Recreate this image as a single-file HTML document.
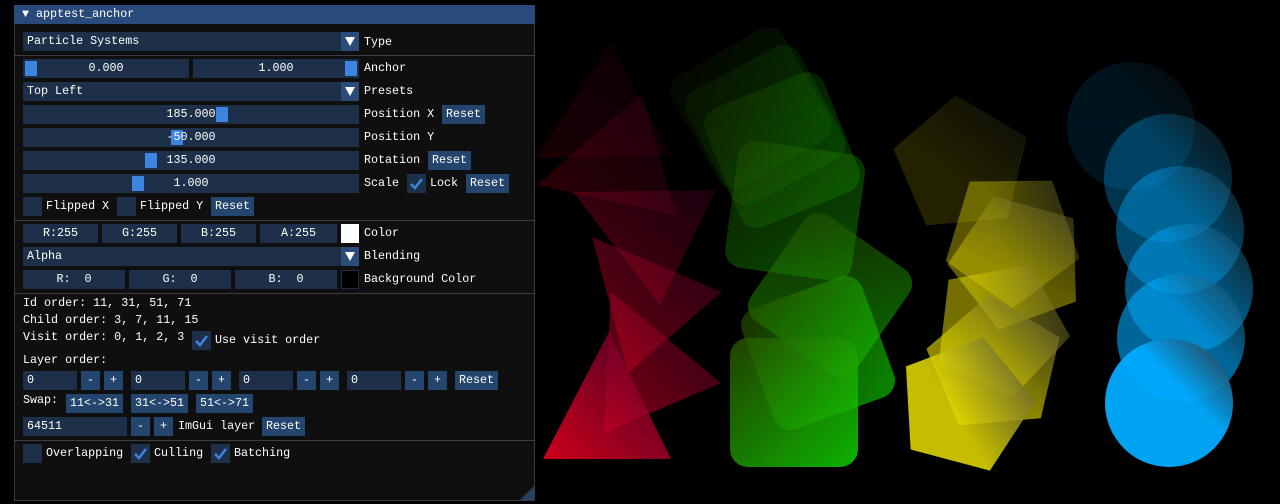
<!DOCTYPE html>
<html><head><meta charset="utf-8"><style>
*{margin:0;padding:0;box-sizing:border-box}
body{width:1280px;height:504px;background:#000;position:relative;overflow:hidden;font-family:"Liberation Mono",monospace;font-size:11.7px;color:#fff}
.a{position:absolute;white-space:pre}
.win{position:absolute;left:14px;top:5px;width:521px;height:496px;background:#0f0f0f;border:1px solid #3b3b44}
.title{position:absolute;left:14px;top:5px;width:521px;height:19px;background:#294a7a;line-height:19px;padding-left:8px}
.f{position:absolute;height:19px;background:#1d2f49;line-height:19px;white-space:pre}
.b{position:absolute;height:19px;background:#24456d;line-height:19px;text-align:center}
.c{text-align:center}
.sep{position:absolute;left:15px;width:519px;height:1px;background:#3c3c44}
.g{position:absolute;width:12px;height:15px;background:#3d85e0}
.arr{position:absolute;width:18px;height:19px;background:#2b4c78}
.arr:after{content:"";position:absolute;left:4px;top:5px;border-left:5px solid transparent;border-right:5px solid transparent;border-top:9px solid #fff}
.t{position:absolute;line-height:19px;white-space:pre}
</style></head><body>
<div class="win"></div>
<div class="title">▼ apptest_anchor</div>

<div class="f" style="left:23px;top:32px;width:335px;padding-left:4px">Particle Systems</div><div class="arr" style="left:341px;top:32px"></div><div class="t" style="left:364px;top:33px">Type</div>
<div class="sep" style="top:55px"></div>

<div class="f" style="left:23px;top:59px;width:166px"></div><div class="g" style="left:25px;top:61px"></div><div class="t c" style="left:23px;top:59px;width:166px">0.000</div>
<div class="f" style="left:193px;top:59px;width:166px"></div><div class="g" style="left:345px;top:61px"></div><div class="t c" style="left:193px;top:59px;width:166px">1.000</div>
<div class="t" style="left:364px;top:59px">Anchor</div>

<div class="f" style="left:23px;top:82px;width:335px;padding-left:4px">Top Left</div><div class="arr" style="left:341px;top:82px"></div><div class="t" style="left:364px;top:82px">Presets</div>

<div class="f" style="left:23px;top:105px;width:336px"></div><div class="g" style="left:216px;top:107px"></div><div class="t c" style="left:23px;top:105px;width:336px">185.000</div>
<div class="t" style="left:364px;top:105px">Position X</div><div class="b" style="left:442px;top:105px;width:43px">Reset</div>

<div class="f" style="left:23px;top:128px;width:336px"></div><div class="g" style="left:171px;top:130px"></div><div class="t c" style="left:23px;top:128px;width:336px">-50.000</div>
<div class="t" style="left:364px;top:128px">Position Y</div>

<div class="f" style="left:23px;top:151px;width:336px"></div><div class="g" style="left:145px;top:153px"></div><div class="t c" style="left:23px;top:151px;width:336px">135.000</div>
<div class="t" style="left:364px;top:151px">Rotation</div><div class="b" style="left:428px;top:151px;width:43px">Reset</div>

<div class="f" style="left:23px;top:174px;width:336px"></div><div class="g" style="left:132px;top:176px"></div><div class="t c" style="left:23px;top:174px;width:336px">1.000</div>
<div class="t" style="left:364px;top:174px">Scale</div>
<div class="f" style="left:407px;top:174px;width:19px"><svg width="19" height="19"><polyline points="4,10 8,14 15,5" fill="none" stroke="#3d85e0" stroke-width="2.5"/></svg></div>
<div class="t" style="left:430px;top:174px">Lock</div><div class="b" style="left:466px;top:174px;width:43px">Reset</div>

<div class="f" style="left:23px;top:197px;width:19px"></div><div class="t" style="left:46px;top:197px">Flipped X</div>
<div class="f" style="left:117px;top:197px;width:19px"></div><div class="t" style="left:140px;top:197px">Flipped Y</div>
<div class="b" style="left:211px;top:197px;width:43px">Reset</div>
<div class="sep" style="top:220px"></div>

<div class="f c" style="left:23px;top:224px;width:75px">R:255</div>
<div class="f c" style="left:102px;top:224px;width:75px">G:255</div>
<div class="f c" style="left:181px;top:224px;width:75px">B:255</div>
<div class="f c" style="left:260px;top:224px;width:77px">A:255</div>
<div class="a" style="left:341px;top:224px;width:18px;height:19px;background:#fff"></div>
<div class="t" style="left:364px;top:224px">Color</div>

<div class="f" style="left:23px;top:247px;width:335px;padding-left:4px">Alpha</div><div class="arr" style="left:341px;top:247px"></div><div class="t" style="left:364px;top:247px">Blending</div>

<div class="f c" style="left:23px;top:270px;width:102px">R:  0</div>
<div class="f c" style="left:129px;top:270px;width:102px">G:  0</div>
<div class="f c" style="left:235px;top:270px;width:102px">B:  0</div>
<div class="a" style="left:341px;top:270px;width:18px;height:19px;background:#000;border:1px solid #1d2f49"></div>
<div class="t" style="left:364px;top:270px">Background Color</div>
<div class="sep" style="top:293px"></div>

<div class="t" style="left:23px;top:294px">Id order: 11, 31, 51, 71</div>
<div class="t" style="left:23px;top:311px">Child order: 3, 7, 11, 15</div>
<div class="t" style="left:23px;top:328px">Visit order: 0, 1, 2, 3</div>
<div class="f" style="left:192px;top:331px;width:19px"><svg width="19" height="19"><polyline points="4,10 8,14 15,5" fill="none" stroke="#3d85e0" stroke-width="2.5"/></svg></div>
<div class="t" style="left:215px;top:331px">Use visit order</div>
<div class="t" style="left:23px;top:351px">Layer order:</div>

<div class="f" style="left:23px;top:371px;width:54px;padding-left:4px">0</div><div class="b" style="left:81px;top:371px;width:19px">-</div><div class="b" style="left:104px;top:371px;width:19px">+</div>
<div class="f" style="left:131px;top:371px;width:54px;padding-left:4px">0</div><div class="b" style="left:189px;top:371px;width:19px">-</div><div class="b" style="left:212px;top:371px;width:19px">+</div>
<div class="f" style="left:239px;top:371px;width:54px;padding-left:4px">0</div><div class="b" style="left:297px;top:371px;width:19px">-</div><div class="b" style="left:320px;top:371px;width:19px">+</div>
<div class="f" style="left:347px;top:371px;width:54px;padding-left:4px">0</div><div class="b" style="left:405px;top:371px;width:19px">-</div><div class="b" style="left:428px;top:371px;width:19px">+</div>
<div class="b" style="left:455px;top:371px;width:43px">Reset</div>

<div class="t" style="left:23px;top:391px">Swap:</div>
<div class="b" style="left:66px;top:394px;width:57px">11&lt;-&gt;31</div>
<div class="b" style="left:131px;top:394px;width:57px">31&lt;-&gt;51</div>
<div class="b" style="left:196px;top:394px;width:57px">51&lt;-&gt;71</div>

<div class="f" style="left:23px;top:417px;width:104px;padding-left:4px">64511</div><div class="b" style="left:131px;top:417px;width:19px">-</div><div class="b" style="left:154px;top:417px;width:19px">+</div>
<div class="t" style="left:178px;top:417px">ImGui layer</div><div class="b" style="left:262px;top:417px;width:43px">Reset</div>
<div class="sep" style="top:440px"></div>

<div class="f" style="left:23px;top:444px;width:19px"></div><div class="t" style="left:46px;top:444px">Overlapping</div>
<div class="f" style="left:131px;top:444px;width:19px"><svg width="19" height="19"><polyline points="4,10 8,14 15,5" fill="none" stroke="#3d85e0" stroke-width="2.5"/></svg></div><div class="t" style="left:154px;top:444px">Culling</div>
<div class="f" style="left:211px;top:444px;width:19px"><svg width="19" height="19"><polyline points="4,10 8,14 15,5" fill="none" stroke="#3d85e0" stroke-width="2.5"/></svg></div><div class="t" style="left:234px;top:444px">Batching</div>
<svg class="a" style="left:518px;top:484px" width="16" height="16"><polygon points="16,2 16,16 2,16" fill="#26405f"/></svg>

<svg class="a" style="left:536px;top:0" width="744" height="504" viewBox="536 0 744 504">
<defs>
<linearGradient id="r" x1="1" y1="0" x2="0" y2="1"><stop offset="0" stop-color="#500030"/><stop offset="1" stop-color="#ff0020"/></linearGradient>
<linearGradient id="gr" x1="0" y1="0" x2="1" y2="1"><stop offset="0" stop-color="#2a5000"/><stop offset="1" stop-color="#10e000"/></linearGradient>
<linearGradient id="y" x1="1" y1="0" x2="0" y2="1"><stop offset="0" stop-color="#404040"/><stop offset="0.6" stop-color="#e8de00"/><stop offset="1" stop-color="#e8de00"/></linearGradient>
<linearGradient id="bl" x1="1" y1="0" x2="0" y2="1"><stop offset="0" stop-color="#303030"/><stop offset="0.4" stop-color="#00aaff"/><stop offset="1" stop-color="#00aaff"/></linearGradient>
</defs>
<g fill="url(#r)">
<polygon points="610,43 535,158 671,155" opacity="0.1"/>
<polygon points="642,93 537,185 676,215" opacity="0.18"/>
<polygon points="573,192 716,190 660,305" opacity="0.32"/>
<polygon points="592,237 722,292 628,373" opacity="0.42"/>
<polygon points="611,292 721,383 604,433" opacity="0.5"/>
<polygon points="609,332 543,459 671,459" opacity="0.8"/>
</g>
<g fill="url(#gr)">
<rect x="-64" y="-64" width="128" height="128" rx="18" transform="translate(751,108) rotate(-30)" opacity="0.1"/>
<rect x="-64" y="-64" width="128" height="128" rx="18" transform="translate(765,125) rotate(-28)" opacity="0.14"/>
<rect x="-64" y="-64" width="128" height="128" rx="18" transform="translate(782,150) rotate(-22)" opacity="0.22"/>
<rect x="-64" y="-64" width="128" height="128" rx="18" transform="translate(795,211) rotate(8)" opacity="0.35"/>
<rect x="-64" y="-64" width="128" height="128" rx="18" transform="translate(830,295) rotate(35)" opacity="0.5"/>
<rect x="-64" y="-64" width="128" height="128" rx="18" transform="translate(818,353) rotate(-20)" opacity="0.6"/>
<rect x="730" y="338" width="128" height="129" rx="18" opacity="0.8"/>
</g>
<g fill="url(#y)">
<polygon points="0,-70 67,-22 41,57 -41,57 -67,-22" transform="translate(962,165) rotate(-5)" opacity="0.15"/>
<polygon points="0,-70 67,-22 41,57 -41,57 -67,-22" transform="translate(1012,238) rotate(35)" opacity="0.38"/>
<polygon points="0,-70 67,-22 41,57 -41,57 -67,-22" transform="translate(1018,262) rotate(-20)" opacity="0.42"/>
<polygon points="0,-70 67,-22 41,57 -41,57 -67,-22" transform="translate(1000,328) rotate(25)" opacity="0.5"/>
<polygon points="0,-70 67,-22 41,57 -41,57 -67,-22" transform="translate(995,365) rotate(-5)" opacity="0.6"/>
<polygon points="0,-70 67,-22 41,57 -41,57 -67,-22" transform="translate(965,405) rotate(15)" opacity="0.85"/>
</g>
<g fill="url(#bl)">
<circle cx="1131" cy="126" r="64" opacity="0.12"/>
<circle cx="1168" cy="178" r="64" opacity="0.3"/>
<circle cx="1180" cy="230" r="64" opacity="0.42"/>
<circle cx="1189" cy="288" r="64" opacity="0.5"/>
<circle cx="1181" cy="338" r="64" opacity="0.6"/>
<circle cx="1169" cy="403" r="64" opacity="0.95"/>
</g>
</svg>
</body></html>
